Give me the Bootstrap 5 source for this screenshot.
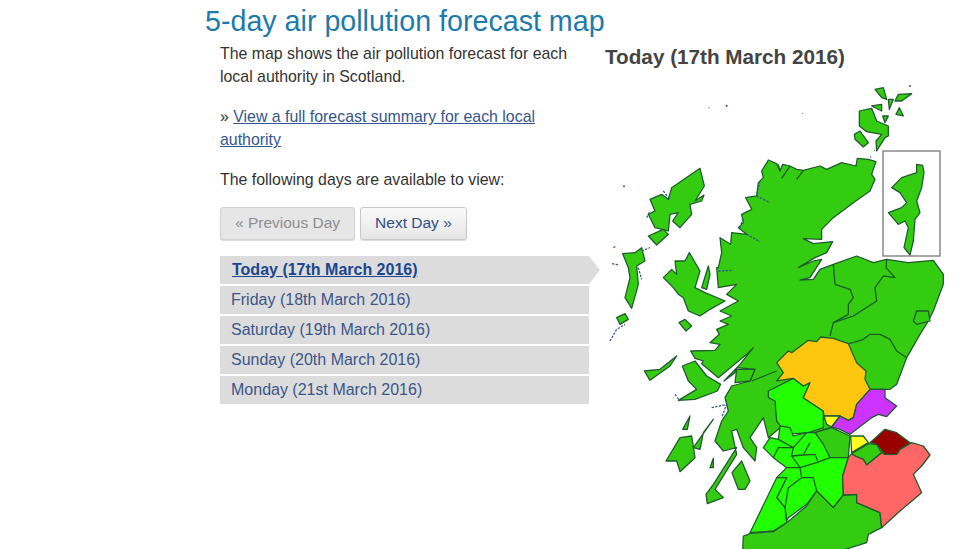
<!DOCTYPE html>
<html lang="en">
<head>
<meta charset="utf-8">
<title>5-day air pollution forecast map</title>
<link href="https://cdn.jsdelivr.net/npm/bootstrap@5.3.0/dist/css/bootstrap.min.css" rel="stylesheet">
<style>
html,body{height:549px;overflow:hidden;background:#fff}
body{font-family:"Liberation Sans",Arial,sans-serif;font-size:16px;color:#333}
.pagewrap{padding-left:205px}
.maintitle{font-family:"Liberation Sans",Arial,sans-serif;font-size:28.65px;line-height:32px;color:#1c7bad;margin:5px 0 0;font-weight:400;white-space:nowrap}
.leftcol{width:400px;padding:5px 0 0 15px;flex:none}
.leftcol p{line-height:23.3px;margin:0 0 16.5px;color:#333;max-width:350px;font-size:15.9px}
.leftcol a{color:#34568f}
.btnrow{gap:5px;margin-top:-1px}
.pagerbtn{font-size:15.5px;line-height:22px;padding:4px 14px;height:33px;border:1px solid #c8c8c8;border-radius:3px;background:linear-gradient(#fafafa,#e6e6e6);color:#2f4f88;box-shadow:0 1px 1px rgba(0,0,0,.15)}
.pagerbtn.btn:disabled{background:#e6e6e6;color:#8f8f8f;opacity:1;border-color:#d2d2d2}
.daylist{width:369px;margin-top:16px}
.dayitem{background:#dcdcdc;height:28px;line-height:28px;padding-left:11px;margin-bottom:2px;color:#3b5689;position:relative}
.dayitem.current{padding-left:12px;font-weight:700}
.dayitem.current a{color:#1b478f}
.dayitem.current::after{content:"";position:absolute;left:100%;top:0;border-left:11px solid #dcdcdc;border-top:14px solid transparent;border-bottom:14px solid transparent}
.rightcol{flex:none;width:371px}
.maphead{font-size:20.7px;font-weight:700;color:#444;line-height:26px;margin:7px 0 1px;white-space:nowrap}
.mapart{display:block;width:371px;height:480px;margin:0 0 0 -5px}
.mapart polygon{stroke:#1f5a2c;stroke-width:3.8;stroke-linejoin:round}
.mapart polyline{fill:none;stroke:#1c5a26;stroke-width:3.8;stroke-linejoin:round}
.mapart .isle{stroke:#34568f;stroke-dasharray:7 4}
.dk{fill:#33cc11}.lt{fill:#22ff00}
</style>
</head>
<body>
<div class="pagewrap">
  <h1 class="maintitle">5-day air pollution forecast map</h1>
  <div class="d-flex">
    <div class="leftcol">
      <p>The map shows the air pollution forecast for each local authority in Scotland.</p>
      <p>» <a href="#">View a full forecast summary for each local authority</a></p>
      <p>The following days are available to view:</p>
      <div class="d-flex btnrow">
        <button class="btn pagerbtn" disabled>« Previous Day</button>
        <button class="btn pagerbtn">Next Day »</button>
      </div>
      <div class="daylist">
        <div class="dayitem current"><a href="#">Today (17th March 2016)</a></div>
        <div class="dayitem">Friday (18th March 2016)</div>
        <div class="dayitem">Saturday (19th March 2016)</div>
        <div class="dayitem">Sunday (20th March 2016)</div>
        <div class="dayitem">Monday (21st March 2016)</div>
      </div>
    </div>
    <div class="rightcol">
      <div class="maphead">Today (17th March 2016)</div>
      <svg class="mapart" viewBox="600 70 371 480" xmlns="http://www.w3.org/2000/svg" role="img" aria-label="Map of Scotland">
        <rect x="883" y="150" width="57" height="105" fill="none" stroke="#8a8a8a" stroke-width="1.5"/>
        <g transform="translate(600 70) scale(.33333)">
          <polygon class="dk" points="505,267 530,278 540,300 548,280 570,285 590,295 610,298 660,285 680,295 725,275 768,285 772,262 805,265 828,272 815,310 825,325 810,360 760,395 700,440 665,475 665,505 610,503 640,518 698,512 680,545 645,560 595,590 640,570 665,565 630,620 600,627 640,625 660,595 700,580 770,555 820,575 860,565 925,575 1000,568 1030,610 1030,640 1000,720 985,750 960,790 920,860 890,940 870,955 810,955 770,1000 720,1035 695,1068 645,1085 540,1070 505,1100 490,1040 450,1100 470,1130 465,1170 430,1130 410,1075 395,1080 410,1150 345,1255 370,1280 322,1298 318,1270 340,1240 410,1130 370,1140 345,1110 365,1050 385,1020 375,980 395,945 450,930 465,895 410,890 405,905 372,930 420,880 460,830 440,850 355,920 305,878 310,870 285,862 272,840 345,838 360,820 330,815 358,790 350,775 385,760 360,750 395,735 360,720 415,690 380,670 410,640 355,650 350,590 355,590 365,545 360,500 392,520 395,485 440,490 415,470 430,455 425,430 455,415 437,380 470,375 475,335 490,320 485,300"/>
          <polyline points="700,580 705,640 750,655 760,680 745,700 745,730 700,755 690,795"/>
          <polyline points="860,565 858,590 885,620 850,615 825,650 830,690 760,735 700,755"/>
          <polyline points="535,280 540,300"/><polyline points="570,285 545,322"/><polyline points="610,298 590,325"/>
          <polyline class="isle" points="470,375 510,395"/><polyline class="isle" points="440,490 480,512"/>
          <polyline class="isle" points="355,600 400,598"/><polyline class="isle" points="480,330 470,370"/><polyline class="isle" points="420,470 430,440"/>
          <!-- Lewis and Harris -->
          <polygon class="dk" points="215,350 300,292 313,345 285,390 312,372 305,390 270,400 275,430 240,470 218,450 235,425 210,430 205,480 165,470 145,430 165,420 150,385 185,370 205,385"/>
          <polygon class="dk" points="145,495 190,475 205,490 170,522"/>
          <!-- Uists -->
          <polygon class="dk" points="68,548 105,545 125,530 135,570 110,585 115,640 95,712 75,680 90,620 85,590"/>
          <polyline class="isle" points="125,540 150,530"/><polyline class="isle" points="140,440 150,420"/><polyline class="isle" points="190,360 210,385"/><polyline class="isle" points="36,578 58,582"/><polyline class="isle" points="40,530 48,525"/><polyline class="isle" points="115,590 125,625"/>
          <!-- Skye -->
          <polygon class="dk" points="190,620 215,595 230,610 225,570 255,570 268,545 300,600 285,650 315,665 375,690 330,715 300,735 265,720 250,680 235,670 220,650"/>
          <polygon class="dk" points="305,650 325,585 330,610 320,655"/>
          <!-- Shetland -->
          <polygon class="dk" points="875,350 905,320 950,305 950,280 968,283 972,305 965,350 950,390 960,425 945,445 940,510 930,552 912,530 925,470 915,450 895,460 865,425 905,410 920,395 900,365"/>
          <!-- Orkney -->
          <polygon class="dk" points="778,120 815,112 830,150 865,165 865,195 855,200 830,240 828,210 845,190 800,182 778,165"/>
          <polygon class="dk" points="763,190 780,180 805,215 790,228 765,205"/>
          <polygon class="dk" points="848,135 865,135 855,155"/>
          <polygon class="dk" points="815,105 845,100 845,120"/>
          <polygon class="dk" points="825,55 850,50 860,85 845,80"/>
          <polygon class="dk" points="895,70 935,68 905,90 885,90"/>
          <polygon class="dk" points="888,130 898,110 910,135"/>
          <polygon class="dk" points="865,85 880,85 868,115"/>
          <circle cx="380" cy="104" r="3" fill="#2f4f6a"/><circle cx="327" cy="110" r="2" fill="#5a7a8a"/><circle cx="72" cy="346" r="3" fill="#3a5a6a"/><circle cx="608" cy="127" r="2" fill="#7a8a90"/><circle cx="824" cy="238" r="2" fill="#3a5a6a"/><circle cx="930" cy="45" r="3" fill="#3a5a6a"/><circle cx="812" cy="258" r="2" fill="#3a5a6a"/>
        </g>
        <g transform="translate(600 300) scale(.33333)">
          <polygon class="dk" points="247,195 285,180 320,225 362,250 352,270 285,295 235,298 290,265 265,240"/>
          <polygon class="dk" points="133,210 180,205 230,165 210,195 150,238"/>
          <polygon class="dk" points="237,65 255,55 275,75 258,90"/>
          <polygon class="dk" points="50,50 75,38 85,55 60,70"/>
          <polygon class="dk" points="198,480 240,410 275,405 285,470 240,512 230,480"/>
          <polygon class="dk" points="280,440 340,355 310,395 300,445"/>
          <polygon class="dk" points="396,515 425,480 450,540 435,565 415,565"/>
          <polygon class="dk" points="248,385 270,345 262,385"/>
          <polygon class="dk" points="330,500 340,472 340,500"/>
          <polyline class="isle" points="30,120 50,85 75,70"/><polyline class="isle" points="225,280 240,300"/><polyline class="isle" points="335,320 380,310 365,350"/>
          <polyline points="760,125 790,115 810,100 840,100 870,115 890,150 920,170"/>
          <polyline points="760,125 745,128"/>
          <polygon class="dk" points="940,60 950,30 985,30 990,60 950,70"/>
          <polyline points="455,240 530,210"/>
          <polygon class="dk" points="410,205 465,205 450,240 405,245"/>
          <polygon class="dk" points="645,395 695,380 750,405 745,470 690,470"/>
          <polygon class="lt" points="505,270 580,232 610,255 630,245 610,290 670,330 670,380 625,395 560,400 530,360 525,300 505,290"/>
          <polygon fill="#ffc610" points="530,185 565,150 575,155 625,118 650,122 662,108 700,112 745,128 770,185 798,210 795,235 810,265 770,310 760,350 745,358 720,345 672,345 670,330 610,290 630,245 610,255 580,232 530,240 550,215"/>
          <polygon fill="#ffff22" points="672,345 720,345 695,378 680,370"/>
          <polygon fill="#cc33ff" points="695,378 720,345 745,358 760,350 770,310 810,265 855,265 855,290 890,315 860,347 835,340 815,350 750,400 720,385"/>
          <polygon class="lt" points="490,440 510,410 535,415 540,375 570,380 580,405 620,395 645,395 670,430 690,470 745,470 728,525 730,582 700,620 650,570 620,610 565,650 560,660 555,620 530,590 560,530 530,530 560,500 520,470"/>
          <polygon class="lt" points="450,695 530,530 560,530 530,590 555,620 560,665 520,690"/>
          <polyline points="535,415 580,440 620,395"/><polyline points="580,440 575,465 610,462 630,425"/>
          <polyline points="520,470 535,440 580,440"/><polyline points="575,465 600,500 650,485 690,470"/>
          <polyline points="560,500 600,500 605,530 640,530 650,570"/><polyline points="605,530 565,560 555,620"/>
          <polyline points="610,462 645,460 655,485"/>
          <polygon class="dk" points="430,705 445,700 450,697 520,692 560,665 620,615 650,570 700,620 730,582 770,580 770,605 840,635 845,680 805,700 800,725 720,750 428,750"/>
          <polygon fill="#ffff22" points="752,405 790,405 805,425 755,455"/>
          <polygon class="dk" points="755,458 805,428 830,430 845,455 800,492 790,475 765,465"/>
          <polygon fill="#ff6666" points="745,470 755,458 765,465 790,475 800,492 845,455 855,460 890,460 900,445 935,425 970,435 990,462 965,495 940,520 965,575 900,630 845,680 840,635 770,605 770,580 730,582 728,525"/>
          <polygon fill="#990000" points="810,425 855,385 890,395 930,425 900,445 890,460 855,460 830,430"/>
        </g>
      </svg>
    </div>
  </div>
</div>
<script src="https://cdn.jsdelivr.net/npm/bootstrap@5.3.0/dist/js/bootstrap.bundle.min.js"></script>
</body>
</html>
